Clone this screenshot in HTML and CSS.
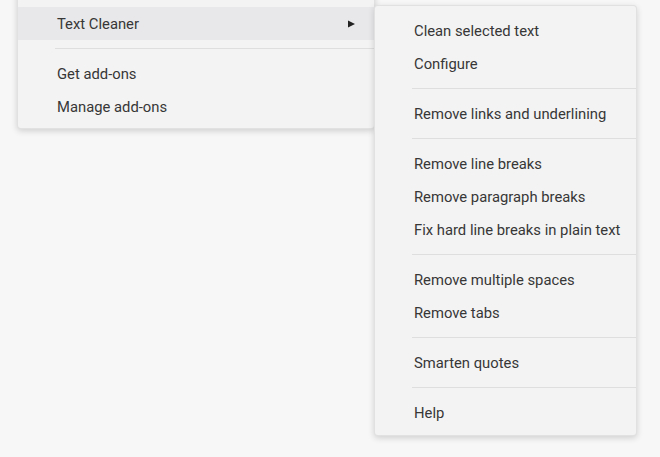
FILE: index.html
```html
<!DOCTYPE html>
<html>
<head>
<meta charset="utf-8">
<link rel="stylesheet" href="styles.css">
</head>
<body>
<div class="menu main-menu">
  <div class="item hover"><span>Text Cleaner</span><svg class="arrow" width="8" height="8" viewBox="0 0 8 8"><path d="M0 0.5 L7 4 L0 7.5 Z" fill="#222"/></svg></div>
  <div class="sep"></div>
  <div class="item">Get add-ons</div>
  <div class="item">Manage add-ons</div>
</div>
<div class="menu sub-menu">
  <div class="item">Clean selected text</div>
  <div class="item">Configure</div>
  <div class="sep"></div>
  <div class="item">Remove links and underlining</div>
  <div class="sep"></div>
  <div class="item">Remove line breaks</div>
  <div class="item">Remove paragraph breaks</div>
  <div class="item">Fix hard line breaks in plain text</div>
  <div class="sep"></div>
  <div class="item">Remove multiple spaces</div>
  <div class="item">Remove tabs</div>
  <div class="sep"></div>
  <div class="item">Smarten quotes</div>
  <div class="sep"></div>
  <div class="item">Help</div>
</div>
</body>
</html>
```
FILE: styles.css
```css
html, body {
  margin: 0;
  padding: 0;
}
body {
  width: 660px;
  height: 457px;
  overflow: hidden;
  position: relative;
  background: #f7f7f7;
  font-family: Roboto, "Liberation Sans", sans-serif;
  font-size: 14.8px;
  color: #373737;
}
.menu {
  position: absolute;
  box-sizing: border-box;
  background: #f3f3f3;
  border: 1px solid rgba(0,0,0,0.07);
  border-radius: 4px;
  box-shadow: 0 2px 6px rgba(0,0,0,0.16);
  display: flex;
  flex-direction: column;
  padding: 8px 0 6px;
}
.main-menu {
  left: 17px;
  top: -36px;
  width: 358px;
  padding-top: 42px;
  padding-bottom: 5px;
}
.sub-menu {
  left: 374px;
  top: 5px;
  width: 263px;
}
.item {
  height: 33px;
  display: flex;
  align-items: center;
  justify-content: space-between;
  padding: 0 20px 0 39px;
  white-space: nowrap;
}
.item.hover {
  background: #e8e8ea;
}
.arrow {
  display: block;
  margin-right: -2px;
}
.sep {
  height: 1px;
  background: #dedede;
  margin: 8px 0 8px 37px;
}
```
